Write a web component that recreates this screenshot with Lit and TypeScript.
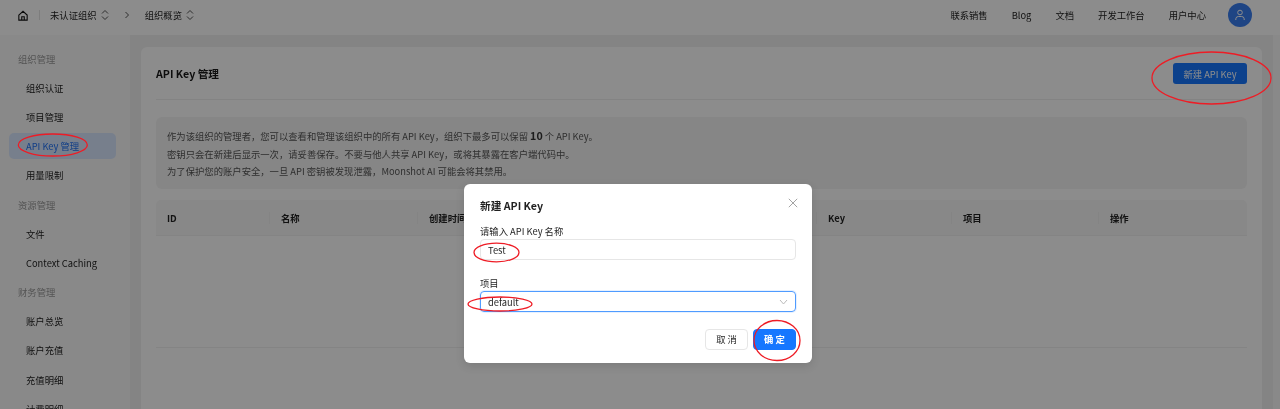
import { LitElement, html, css } from "lit";
import { customElement } from "lit/decorators.js";

const updown = html`<svg class="ud" viewBox="0 0 8 12" width="8" height="12"><path d="M1 4.5 4 1.5 7 4.5M1 7.5 4 10.5 7 7.5" fill="none" stroke="currentColor" stroke-width="1"/></svg>`;

@customElement("app-root")
export class AppRoot extends LitElement {
  static styles = css`
    :host { display: block; width: 1280px; height: 409px; overflow: hidden; position: relative; font-family: "Noto Sans CJK SC", "Liberation Sans", sans-serif; font-size: 9.33px; color: #1c1c1c; filter: blur(.25px); }
    .page { height: 409px; display: flex; flex-direction: column; background: #f0f0f0; }
    .top { height: 35px; flex: none; background: #fff; display: flex; align-items: center; padding: 0 28px 5px 18px; box-sizing: border-box; }
    .home { width: 10px; height: 11px; color: #111; }
    .sep { width: 1px; height: 10px; background: #e4e4e4; margin: 0 10px 0 11px; }
    .crumb { display: flex; align-items: center; gap: 4px; color: #1f1f1f; }
    .ud { color: #555; }
    .chev { margin: 0 15px; color: #555; display: flex; }
    .links { margin-left: auto; display: flex; align-items: center; gap: 24px; color: #1f1f1f; }
    .avatar { width: 24px; height: 24px; border-radius: 50%; background: #3a7ef0; color: #fff; display: flex; align-items: center; justify-content: center; margin-left: -2px; }
    .main { flex: 1; display: flex; min-height: 0; }
    .side { width: 130px; flex: none; background: #fafafa; padding: 10.6px 14px 0 9px; box-sizing: border-box; display: flex; flex-direction: column; gap: 3.2px; }
    .group { flex: none; color: #999; height: 26px; padding-left: 9px; line-height: 26px; }
    .item { flex: none; height: 26px; border-radius: 5px; line-height: 26px; padding-left: 17px; color: #222; }
    .item.on { background: #d9e8ff; color: #2272f5; }
    .content { flex: 1; padding: 12px 11px 0 11px; min-width: 0; }
    .bar { width: 7px; flex: none; background: #fafafa; }
    .card { background: #fff; border-radius: 6px 6px 0 0; height: 400px; padding: 0 15px; box-sizing: border-box; }
    .head { height: 53px; display: flex; align-items: center; justify-content: space-between; border-bottom: 1px solid #eee; box-sizing: border-box; padding-top: 1px; }
    .title { font-size: 10.67px; font-weight: 700; color: #1a1a1a; }
    .new { height: 21px; width: 74px; background: #1677ff; color: #fff; border-radius: 3px; display: flex; align-items: center; justify-content: center; }
    .note { margin-top: 17px; background: #f4f4f4; border-radius: 6px; height: 72px; padding: 10px 11px; box-sizing: border-box; color: #555; line-height: 17.5px; }
    .note b { color: #333; font-size: 10.67px; }
    .table { margin-top: 11px; }
    .row { height: 36px; background: #f7f7f7; border-radius: 5px 5px 0 0; display: grid; grid-template-columns: 113px 148px 399px 135px 147px 1fr; align-items: center; font-weight: 700; color: #222; border-bottom: 1px solid #f0f0f0; box-sizing: border-box; }
    .row span { padding-left: 11px; border-left: 1px solid #f0f0f0; line-height: 12px; }
    .row span:first-child { border-left: 0; padding-left: 11px; }
    .empty { height: 111px; border-bottom: 1px solid #f0f0f0; }
    .mask { position: absolute; inset: 0; background: rgba(0,0,0,.45); }
    .modal { position: absolute; left: 464px; top: 184px; width: 348px; height: 179px; background: #fff; border-radius: 6px; box-sizing: border-box; padding: 15px 16px 0; color: #262626; box-shadow: 0 3px 10px rgba(0,0,0,.12); }
    .mt { font-size: 10.67px; font-weight: 700; color: #1f1f1f; line-height: 14px; margin-bottom: 12px; }
    .x { position: absolute; right: 14px; top: 14px; color: #999; }
    .lab { line-height: 13px; margin-bottom: 1px; }
    .inp { height: 21px; border: 1px solid #e6e6e6; border-radius: 4px; box-sizing: border-box; display: flex; align-items: center; padding: 0 7px; justify-content: space-between; }
    .inp.f { border-color: #4f9bff; box-shadow: 0 0 0 1px rgba(22,119,255,.1); }
    .sp { height: 17px; }
    .btns { display: flex; justify-content: flex-end; gap: 5px; margin-top: 16.6px; }
    .b { width: 43px; height: 21px; border-radius: 4px; border: 1px solid #e6e6e6; box-sizing: border-box; display: flex; align-items: center; justify-content: center; white-space: pre; }
    .b.p { background: #1677ff; border-color: #1677ff; color: #fff; font-weight: 700; }
    .marks { position: absolute; inset: 0; width: 1280px; height: 409px; pointer-events: none; }
    .marks ellipse { fill: none; stroke: #ee1c25; stroke-width: 1.3; }
  `;

  render() {
    return html`
      <div class="page">
        <div class="top">
          <svg class="home" viewBox="0 0 12 13"><path d="M1 6 6 1.5 11 6V12H1ZM4.5 12V8H7.5V12" fill="none" stroke="currentColor" stroke-width="1.3"/></svg>
          <span class="sep"></span>
          <span class="crumb">未认证组织 ${updown}</span>
          <span class="chev"><svg width="6" height="10" viewBox="0 0 6 10"><path d="M1.5 2 4.5 5 1.5 8" fill="none" stroke="currentColor"/></svg></span>
          <span class="crumb">组织概览 ${updown}</span>
          <div class="links">
            <span>联系销售</span><span>Blog</span><span>文档</span><span>开发工作台</span><span>用户中心</span>
            <span class="avatar"><svg width="12" height="12" viewBox="0 0 12 12"><circle cx="6" cy="3.5" r="2.3" fill="none" stroke="currentColor"/><path d="M1.8 11V9.8A2.6 2.6 0 0 1 4.4 7.5H7.6A2.6 2.6 0 0 1 10.2 9.8V11" fill="none" stroke="currentColor"/></svg></span>
          </div>
        </div>
        <div class="main">
          <div class="side">
            <div class="group">组织管理</div>
            <div class="item">组织认证</div>
            <div class="item">项目管理</div>
            <div class="item on">API Key 管理</div>
            <div class="item">用量限制</div>
            <div class="group">资源管理</div>
            <div class="item">文件</div>
            <div class="item">Context Caching</div>
            <div class="group">财务管理</div>
            <div class="item">账户总览</div>
            <div class="item">账户充值</div>
            <div class="item">充值明细</div>
            <div class="item">计费明细</div>
          </div>
          <div class="content">
            <div class="card">
              <div class="head"><span class="title">API Key 管理</span><span class="new">新建 API Key</span></div>
              <div class="note">
                作为该组织的管理者，您可以查看和管理该组织中的所有 API Key，组织下最多可以保留 <b>10</b> 个 API Key。<br>
                密钥只会在新建后显示一次，请妥善保存。不要与他人共享 API Key，或将其暴露在客户端代码中。<br>
                为了保护您的账户安全，一旦 API 密钥被发现泄露，Moonshot AI 可能会将其禁用。
              </div>
              <div class="table">
                <div class="row"><span>ID</span><span>名称</span><span>创建时间</span><span>Key</span><span>项目</span><span>操作</span></div>
                <div class="empty"></div>
              </div>
            </div>
          </div>
          <div class="bar"></div>
        </div>
      </div>
      <div class="mask"></div>
      <div class="modal">
        <div class="mt">新建 API Key</div>
        <svg class="x" width="10" height="10" viewBox="0 0 10 10"><path d="M.8.8 9.2 9.2M9.2.8.8 9.2" stroke="currentColor" stroke-width=".9"/></svg>
        <div class="lab">请输入 API Key 名称</div>
        <div class="inp">Test</div>
        <div class="sp"></div>
        <div class="lab">项目</div>
        <div class="inp f">default <svg width="9" height="6" viewBox="0 0 9 6"><path d="M1 1 4.5 5 8 1" fill="none" stroke="#bbb"/></svg></div>
        <div class="btns"><span class="b">取 消</span><span class="b p">确 定</span></div>
      </div>
      <svg class="marks" viewBox="0 0 1280 409">
        <ellipse cx="1211.5" cy="78" rx="59.5" ry="26"/>
        <ellipse cx="52.8" cy="145" rx="34.5" ry="11"/>
        <ellipse cx="496.5" cy="252.5" rx="22.5" ry="9.3"/>
        <ellipse cx="500" cy="304" rx="32" ry="7"/>
        <ellipse cx="777" cy="340.5" rx="23" ry="20"/>
      </svg>
    `;
  }
}
